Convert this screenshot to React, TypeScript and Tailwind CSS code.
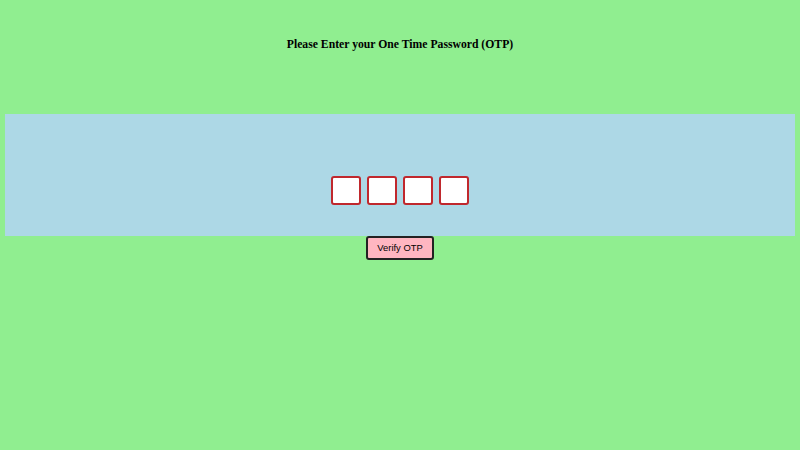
import React from "react";

export default function App() {
  const digits = [0, 1, 2, 3];
  return (
    <div className="min-h-[450px] w-full bg-[#90ee90] pt-[36px]">
      <h4
        className="text-center text-[11.7px] leading-[17px] font-bold text-black"
        style={{ fontFamily: '"Liberation Serif", serif' }}
      >
        Please Enter your One Time Password (OTP)
      </h4>
      <div className="mx-[5px] mt-[61px] flex h-[122px] items-end justify-center gap-[6px] bg-[#add8e6] pb-[31px]">
        {digits.map((d) => (
          <input
            key={d}
            maxLength={1}
            className="h-[29px] w-[30px] rounded-[3px] border-2 border-[#c0282d] bg-white text-center outline-none"
          />
        ))}
      </div>
      <div className="flex justify-center">
        <button
          className="h-[24px] w-[68px] rounded-[3px] border-2 border-[#222] bg-[#ffb6c1] text-[9.4px] text-black"
          style={{ fontFamily: '"Liberation Sans", Arial, sans-serif' }}
        >
          Verify OTP
        </button>
      </div>
    </div>
  );
}
